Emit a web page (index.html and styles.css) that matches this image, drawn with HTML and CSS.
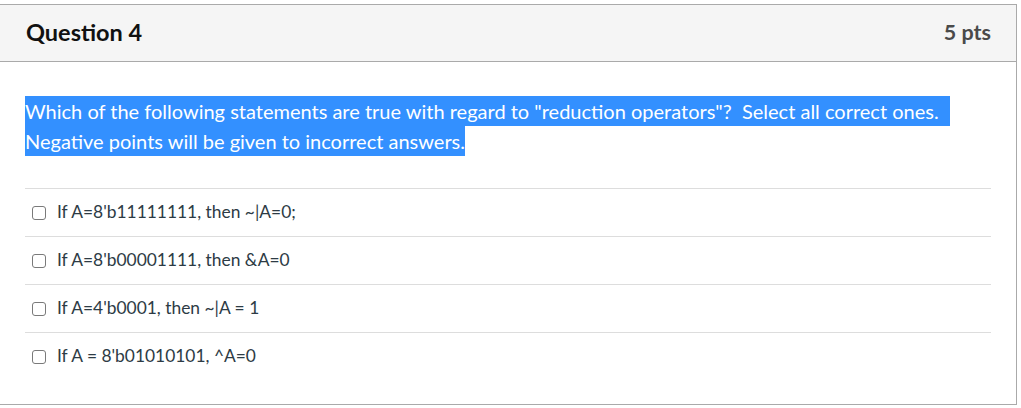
FILE: index.html
```html
<!DOCTYPE html>
<html>
<head>
<meta charset="utf-8">
<link rel="stylesheet" href="styles.css">
</head>
<body>
<div class="question">
  <div class="header">
    <h2 class="name">Question 4</h2>
    <span class="pts">5 pts</span>
  </div>
  <div class="content">
    <p class="qtext"><span class="sel sel1">Which of the following statements are true with regard to "reduction operators"?&nbsp; Select all correct ones.</span><br><span class="sel">Negative points will be given to incorrect answers.</span></p>
    <div class="answers">
      <label class="answer"><input type="checkbox" class="cb"><span class="atext">If A=8'b11111111, then ~|A=0;</span></label>
      <label class="answer"><input type="checkbox" class="cb"><span class="atext">If A=8'b00001111, then &amp;A=0</span></label>
      <label class="answer"><input type="checkbox" class="cb"><span class="atext">If A=4'b0001, then ~|A = 1</span></label>
      <label class="answer"><input type="checkbox" class="cb"><span class="atext">If A = 8'b01010101, ^A=0</span></label>
    </div>
  </div>
</div>
</body>
</html>
```
FILE: styles.css
```css
html, body {
  margin: 0;
  padding: 0;
  background: #fff;
}
body {
  font-family: Lato, "Open Sans", sans-serif;
  color: #2d3b45;
}
.question {
  margin: 4px 4px 0 -1px;
  border: 1px solid #aaaaaa;
  height: 401px;
  box-sizing: border-box;
}
.header {
  display: flex;
  align-items: center;
  justify-content: space-between;
  padding: 0 25px 2px 26px;
  box-sizing: border-box;
  height: 57px;
  background: #f5f5f5;
  border-bottom: 1px solid #aaaaaa;
}
.name {
  margin: 0;
  font-size: 23.5px;
  font-weight: 700;
  color: #111;
}
.pts {
  font-size: 21.5px;
  font-weight: 700;
  color: #4a4a4a;
}
.content {
  padding: 34px 25px 0 25px;
}
.qtext {
  margin: 0 0 32px 0;
  font-size: 20px;
  line-height: 30px;
  color: #fff;
}
.sel {
  display: inline-block;
  background: #3390ff;
  line-height: 30px;
}
.sel1 {
  padding-right: 11px;
}
.answer {
  display: flex;
  align-items: center;
  height: 48px;
  border-top: 1px solid #dddddd;
  box-sizing: border-box;
  padding-left: 7px;
  font-size: 17.4px;
  color: #2d3b45;
}
.atext {
  padding-bottom: 3px;
}
.cb {
  -webkit-appearance: none;
  appearance: none;
  margin: 0 11px 0 0;
  width: 14px;
  height: 14px;
  box-sizing: border-box;
  border: 1.5px solid #7a7a7a;
  border-radius: 3px;
  background: #fff;
}
```
